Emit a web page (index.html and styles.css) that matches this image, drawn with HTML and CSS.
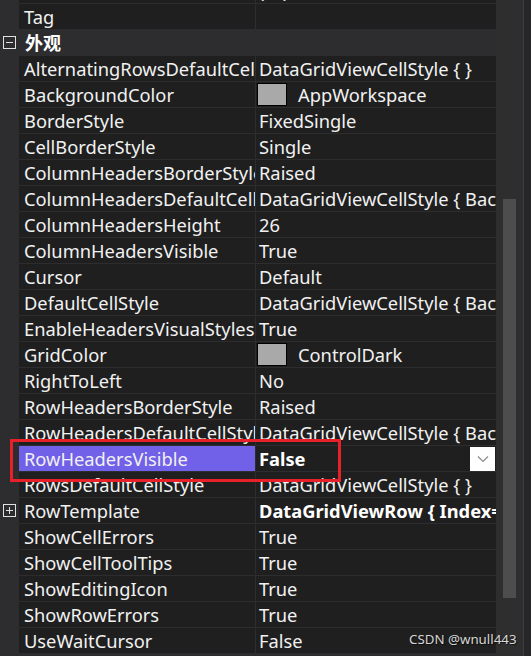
FILE: index.html
```html
<!DOCTYPE html>
<html lang="zh-CN">
<head>
<meta charset="utf-8">
<title>属性</title>
<link rel="stylesheet" href="styles.css">
</head>
<body>
<div class="window">
  <div class="grid">
    <div class="row"><div class="gut"></div><div class="name">DataSource</div><div class="val">(无)</div></div>
    <div class="row"><div class="gut"></div><div class="name">Tag</div><div class="val"></div></div>
    <div class="cat"><div class="gut"><span class="box minus"></span></div><div class="cat-title">外观</div></div>
    <div class="row"><div class="gut"></div><div class="name">AlternatingRowsDefaultCellStyle</div><div class="val">DataGridViewCellStyle { }</div></div>
    <div class="row"><div class="gut"></div><div class="name">BackgroundColor</div><div class="val"><span class="swatch"></span>AppWorkspace</div></div>
    <div class="row"><div class="gut"></div><div class="name">BorderStyle</div><div class="val">FixedSingle</div></div>
    <div class="row"><div class="gut"></div><div class="name">CellBorderStyle</div><div class="val">Single</div></div>
    <div class="row"><div class="gut"></div><div class="name">ColumnHeadersBorderStyle</div><div class="val">Raised</div></div>
    <div class="row"><div class="gut"></div><div class="name">ColumnHeadersDefaultCellStyle</div><div class="val">DataGridViewCellStyle { BackColor=Color [Control] }</div></div>
    <div class="row"><div class="gut"></div><div class="name">ColumnHeadersHeight</div><div class="val">26</div></div>
    <div class="row"><div class="gut"></div><div class="name">ColumnHeadersVisible</div><div class="val">True</div></div>
    <div class="row"><div class="gut"></div><div class="name">Cursor</div><div class="val">Default</div></div>
    <div class="row"><div class="gut"></div><div class="name">DefaultCellStyle</div><div class="val">DataGridViewCellStyle { BackColor=Color [Window] }</div></div>
    <div class="row"><div class="gut"></div><div class="name">EnableHeadersVisualStyles</div><div class="val">True</div></div>
    <div class="row"><div class="gut"></div><div class="name">GridColor</div><div class="val"><span class="swatch"></span>ControlDark</div></div>
    <div class="row"><div class="gut"></div><div class="name">RightToLeft</div><div class="val">No</div></div>
    <div class="row"><div class="gut"></div><div class="name">RowHeadersBorderStyle</div><div class="val">Raised</div></div>
    <div class="row"><div class="gut"></div><div class="name">RowHeadersDefaultCellStyle</div><div class="val">DataGridViewCellStyle { BackColor=Color [Control] }</div></div>
    <div class="row selected"><div class="gut"></div><div class="name">RowHeadersVisible</div><div class="val bold">False<span class="drop"><svg width="12" height="8" viewBox="0 0 12 8"><path d="M1 1.5 L6 6.5 L11 1.5" fill="none" stroke="#8a8a8a" stroke-width="1.2"/></svg></span></div></div>
    <div class="row"><div class="gut"></div><div class="name">RowsDefaultCellStyle</div><div class="val">DataGridViewCellStyle { }</div></div>
    <div class="row"><div class="gut"><span class="box plus"></span></div><div class="name">RowTemplate</div><div class="val bold">DataGridViewRow { Index=-1 }</div></div>
    <div class="row"><div class="gut"></div><div class="name">ShowCellErrors</div><div class="val">True</div></div>
    <div class="row"><div class="gut"></div><div class="name">ShowCellToolTips</div><div class="val">True</div></div>
    <div class="row"><div class="gut"></div><div class="name">ShowEditingIcon</div><div class="val">True</div></div>
    <div class="row"><div class="gut"></div><div class="name">ShowRowErrors</div><div class="val">True</div></div>
    <div class="row"><div class="gut"></div><div class="name">UseWaitCursor</div><div class="val">False</div></div>
  </div>
  <div class="scroll"><div class="thumb"></div></div>
  <div class="edge"></div>
  <div class="highlight"></div>
  <div class="watermark">CSDN @wnull443</div>
</div>
</body>
</html>
```

FILE: styles.css
```css
html, body {
  margin: 0;
  padding: 0;
  background: #2d2d30;
  overflow: hidden;
}
.window {
  position: relative;
  display: flex;
  width: 531px;
  height: 656px;
  overflow: hidden;
  font-family: "Noto Sans", "Noto Sans CJK SC", sans-serif;
  font-size: 18.3px;
  color: #f1f1f1;
}
.grid {
  width: 496px;
  flex: none;
  margin-top: -22px;
  display: flex;
  flex-direction: column;
}
.row, .cat {
  display: flex;
  height: 25px;
  border-bottom: 1px solid #2d2d30;
  line-height: 26px;
  flex: none;
}
.gut {
  width: 19px;
  flex: none;
  background: #2d2d30;
  display: flex;
  align-items: center;
  justify-content: center;
}
.name {
  width: 231px;
  flex: none;
  padding-left: 5px;
  background: #1f1f1f;
  border-right: 1px solid #2d2d30;
  white-space: nowrap;
  overflow: hidden;
}
.val {
  flex: 1;
  min-width: 0;
  padding-left: 3px;
  background: #1f1f1f;
  white-space: nowrap;
  overflow: hidden;
  display: flex;
  align-items: center;
}
.val.bold {
  font-weight: 700;
  color: #ffffff;
}
.selected .name {
  background: #7160e8;
}
.selected .val {
  justify-content: space-between;
}
.drop {
  width: 25px;
  height: 24px;
  background: #ffffff;
  display: flex;
  align-items: center;
  justify-content: center;
  margin-right: 1px;
  flex: none;
}
.swatch {
  width: 28px;
  height: 21px;
  border: 1px solid #000000;
  background: #a9a9a9;
  margin-left: -2px;
  margin-right: 11px;
  flex: none;
}
.cat {
  background: #2d2d30;
}
.cat-title {
  padding-left: 6px;
  font-weight: 700;
  color: #ffffff;
  font-size: 18px;
}
.box {
  position: relative;
  width: 11px;
  height: 11px;
  border: 1px solid #e0e0e0;
  margin-left: -1px;
}
.box::before {
  content: "";
  position: absolute;
  left: 2px;
  right: 2px;
  top: 5px;
  height: 1px;
  background: #e0e0e0;
}
.box.plus::after {
  content: "";
  position: absolute;
  top: 2px;
  bottom: 2px;
  left: 5px;
  width: 1px;
  background: #e0e0e0;
}
.scroll {
  width: 27px;
  flex: none;
  background: #2e2e2e;
  border-right: 1px solid #3e3e42;
  display: flex;
  justify-content: center;
}
.thumb {
  width: 13px;
  height: 399px;
  margin-top: 199px;
  background: #4d4d4d;
}
.edge {
  flex: 1;
  background: #262628;
}
.highlight {
  position: absolute;
  left: 10px;
  top: 439px;
  width: 325px;
  height: 37px;
  border: 3px solid #e8202a;
}
.watermark {
  position: absolute;
  left: 409px;
  top: 630px;
  font-family: "Noto Sans", sans-serif;
  font-size: 13.3px;
  color: #d6d6d6;
  text-shadow: 1px 1px 1px rgba(0, 0, 0, 0.6);
  white-space: nowrap;
}
```
